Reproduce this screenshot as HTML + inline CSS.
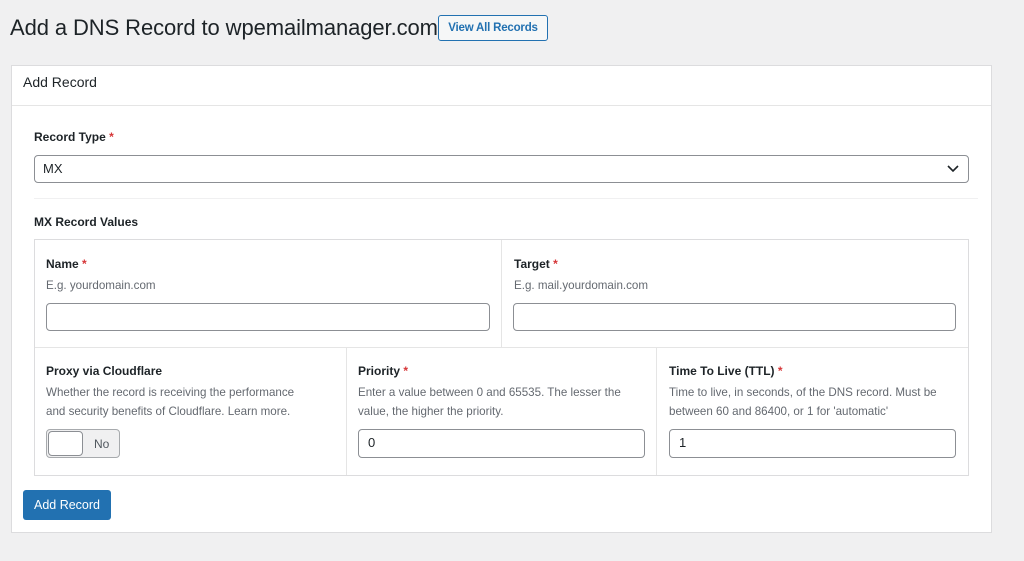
<!DOCTYPE html><html><head><style>
body{margin:0;width:1024px;height:561px;background:#f0f0f1;font-family:"Liberation Sans",sans-serif;color:#1d2327;position:relative;overflow:hidden}
.a{position:absolute}
.lb{font-weight:bold;font-size:12px;color:#1d2327}
.lb i{color:#d63638;font-style:normal}
.d{font-size:11.6px;color:#646970;line-height:19px}
.in{position:absolute;border:1px solid #8c8f94;border-radius:4px;background:#fff;box-sizing:border-box;font-size:13px;padding-left:11px;line-height:26px}
</style></head><body>
<div class="a" style="left:10px;top:15px;font-size:22px;letter-spacing:-0.1px;color:#1d2327;white-space:nowrap">Add a DNS Record to wpemailmanager.com</div>
<div class="a" style="left:438px;top:15px;width:110px;height:26px;box-sizing:border-box;border:1px solid #2271b1;border-radius:3px;background:#f6f7f7;color:#2271b1;font-size:11.5px;font-weight:bold;text-align:center;line-height:24px;letter-spacing:-0.2px">View All Records</div>
<div class="a" style="left:11px;top:65px;width:981px;height:468px;box-sizing:border-box;border:1px solid #dcdcde;background:#fff"></div>
<div class="a" style="left:12px;top:105px;width:979px;height:1px;background:#e5e5e5"></div>
<div class="a" style="left:23px;top:74px;font-size:14px">Add Record</div>
<div class="a lb" style="left:34px;top:130px">Record Type <i>*</i></div>
<div class="in" style="left:34px;top:155px;width:935px;height:28px;padding-left:8px">MX</div>
<svg class="a" style="left:947px;top:164px" width="12" height="10"><path d="M1 2l5 5 5-5" fill="none" stroke="#1d2327" stroke-width="1.6"/></svg>
<div class="a" style="left:34px;top:198px;width:944px;height:1px;background:#f0f0f1"></div>
<div class="a lb" style="left:34px;top:215px">MX Record Values</div>
<div class="a" style="left:34px;top:239px;width:935px;height:237px;box-sizing:border-box;border:1px solid #dcdcde"></div>
<div class="a" style="left:35px;top:347px;width:933px;height:1px;background:#e5e5e5"></div>
<div class="a" style="left:501px;top:240px;width:1px;height:107px;background:#e5e5e5"></div>
<div class="a" style="left:346px;top:348px;width:1px;height:127px;background:#e5e5e5"></div>
<div class="a" style="left:656px;top:348px;width:1px;height:127px;background:#e5e5e5"></div>
<div class="a lb" style="left:46px;top:257px">Name <i>*</i></div>
<div class="a d" style="left:46px;top:276px">E.g. yourdomain.com</div>
<div class="in" style="left:46px;top:303px;width:444px;height:28px"></div>
<div class="a lb" style="left:514px;top:257px">Target <i>*</i></div>
<div class="a d" style="left:514px;top:276px">E.g. mail.yourdomain.com</div>
<div class="in" style="left:513px;top:303px;width:443px;height:28px"></div>
<div class="a lb" style="left:46px;top:364px">Proxy via Cloudflare</div>
<div class="a d" style="left:46px;top:383px;width:268px">Whether the record is receiving the performance and security benefits of Cloudflare. Learn more.</div>
<div class="a" style="left:46px;top:429px;width:74px;height:29px;box-sizing:border-box;border:1px solid #a7aaad;border-radius:4px;background:#f0f0f1"></div>
<div class="a" style="left:48px;top:431px;width:35px;height:25px;box-sizing:border-box;border:1px solid #8c8f94;border-radius:4px;background:#fff"></div>
<div class="a" style="left:94px;top:437px;font-size:12px;color:#50575e">No</div>
<div class="a lb" style="left:358px;top:364px">Priority <i>*</i></div>
<div class="a d" style="left:358px;top:383px;width:290px">Enter a value between 0 and 65535. The lesser the value, the higher the priority.</div>
<div class="in" style="left:358px;top:429px;width:287px;height:29px;padding-left:9px">0</div>
<div class="a lb" style="left:669px;top:364px">Time To Live (TTL) <i>*</i></div>
<div class="a d" style="left:669px;top:383px;width:295px">Time to live, in seconds, of the DNS record. Must be between 60 and 86400, or 1 for 'automatic'</div>
<div class="in" style="left:669px;top:429px;width:287px;height:29px;padding-left:9px">1</div>
<div class="a" style="left:23px;top:490px;width:88px;height:30px;background:#2271b1;border-radius:3px;color:#fff;font-size:12.5px;text-align:center;line-height:30px">Add Record</div>
</body></html>
